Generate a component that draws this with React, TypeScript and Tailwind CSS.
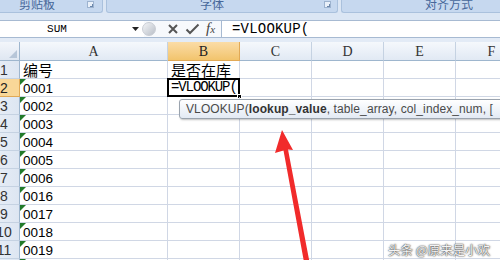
const cols = [
  { key: "A", w: "w-[148px]" },
  { key: "B", w: "w-[72px]" },
  { key: "C", w: "w-[72px]" },
  { key: "D", w: "w-[72px]" },
  { key: "E", w: "w-[72px]" },
  { key: "F", w: "w-[72px]" },
]

const ids = ["0001", "0002", "0003", "0004", "0005", "0006", "0016", "0017", "0018", "0019", ""]

const sans = "font-['Liberation_Sans','Noto_Sans_CJK_SC',sans-serif]"
const cjk = "font-['Noto_Sans_CJK_SC',sans-serif]"
const mono = "font-['Liberation_Mono',monospace]"

function GreenMark() {
  return (
    <svg className="absolute left-0 top-0" width="6" height="6" viewBox="0 0 6 6">
      <polygon points="0,0 6,0 0,6" fill="#227a2a" />
    </svg>
  )
}

function Launcher() {
  return (
    <div className="w-[7px] h-[7px] border border-[#9db3cf] bg-[#e9f0f9] flex items-end justify-end">
      <div className="w-[3px] h-[3px] border-r border-b border-[#6c87ab]" />
    </div>
  )
}

function Ribbon() {
  return (
    <div className="flex h-[13px] gap-[3px] bg-[#dbe6f4] overflow-hidden">
      <div className="w-[103px] h-full flex items-center rounded-br-[3px] bg-[#c6d8ef] border-r border-b border-[#aac1dd]">
        <span className={`pl-[19px] text-[12px] leading-none -mt-[5px] text-[#47679a] ${cjk}`}>剪贴板</span>
        <div className="ml-auto mr-[8px] -mt-[4px]">
          <Launcher />
        </div>
      </div>
      <div className="w-[232px] h-full flex items-center rounded-b-[3px] bg-[#c6d8ef] border-x border-b border-[#aac1dd]">
        <span className={`pl-[93px] text-[12px] leading-none -mt-[5px] text-[#47679a] ${cjk}`}>字体</span>
        <div className="ml-auto mr-[6px] -mt-[4px]">
          <Launcher />
        </div>
      </div>
      <div className="flex-1 h-full flex items-center rounded-bl-[3px] bg-[#c6d8ef] border-l border-b border-[#aac1dd]">
        <span className={`pl-[83px] text-[12px] leading-none -mt-[5px] text-[#47679a] ${cjk}`}>对齐方式</span>
      </div>
    </div>
  )
}

function FormulaBar() {
  return (
    <div className="flex h-[18px] bg-white border-y border-[#a7bad2]">
      <div className="w-[144px] flex items-center relative">
        <span className={`w-[114px] text-center text-[11px] text-black ${mono}`}>SUM</span>
        <svg className="absolute left-[132px] top-[6px]" width="7" height="4" viewBox="0 0 7 4">
          <polygon points="0,0 7,0 3.5,4" fill="#222" />
        </svg>
      </div>
      <div className="w-[78px] flex items-center gap-[6px] border-r border-[#a7bad2] bg-[#f7f9fc]">
        <div className="w-[14px] h-[14px] rounded-full bg-linear-to-br from-[#f4f5f7] to-[#b9bfc8] border border-[#c9cdd4] -ml-[2px]" />
        <svg width="12" height="12" viewBox="0 0 12 12" className="ml-[5px]">
          <path d="M2 2 L10 10 M10 2 L2 10" stroke="#555" strokeWidth="2" />
        </svg>
        <svg width="15" height="12" viewBox="0 0 15 12">
          <path d="M1.5 6.5 L5 10 L13.5 1.5" stroke="#555" strokeWidth="2" fill="none" />
        </svg>
        <span className="text-[15px] leading-none italic text-[#444] font-['Liberation_Serif',serif] -mt-[2px]">
          f<span className="text-[11px]">x</span>
        </span>
      </div>
      <div className="flex-1 flex items-center pl-[10px]">
        <span className={`text-[14px] tracking-[0.2px] text-black ${mono}`}>=VLOOKUP(</span>
      </div>
    </div>
  )
}

function HeaderRow() {
  return (
    <div className="flex h-[19px]">
      <div className="w-[31px] shrink-0 relative bg-linear-to-b from-[#f3f6fb] to-[#dfe7f2] border-r border-b border-[#9eb6ce]">
        <svg className="absolute right-[2px] bottom-[2px]" width="8" height="8" viewBox="0 0 8 8">
          <polygon points="8,0 8,8 0,8" fill="#b7c6d8" />
        </svg>
      </div>
      {cols.map((c) => (
        <div
          key={c.key}
          className={`${c.w} shrink-0 flex items-center justify-center border-r border-b text-[14px] font-['Liberation_Serif',serif] ${
            c.key === "B"
              ? "bg-linear-to-b from-[#fbdca6] to-[#f2c46c] border-[#e1a956] text-[#222]"
              : "bg-linear-to-b from-[#f5f8fc] to-[#e1e9f4] border-r-[#c5d2e2] border-b-[#9eb6ce] text-[#333]"
          }`}
        >
          {c.key}
        </div>
      ))}
    </div>
  )
}

function Row({ n, a, b, mark }: { n: number; a: string; b?: string; mark: boolean }) {
  const active = n === 2
  return (
    <div className="flex h-[18px]">
      <div
        className={`w-[31px] shrink-0 flex items-end justify-center pb-[1px] border-r border-b text-[14px] leading-none ${sans} ${
          active
            ? "bg-[#f9d798] border-r-[#e1a956] border-b-[#e1a956] text-[#222]"
            : "bg-linear-to-r from-[#eaf0f8] to-[#dde6f2] border-r-[#9eb6ce] border-b-[#c5d2e2] text-[#333]"
        }`}
      >
        {n}
      </div>
      <div className="w-[148px] shrink-0 relative flex items-end pl-[3px] pb-[1px] border-r border-b border-[#d0d7e5]">
        {mark && <GreenMark />}
        <span className={`leading-none text-black ${n === 1 ? `text-[15px] ${cjk}` : `text-[13.5px] ${sans}`}`}>{a}</span>
      </div>
      <div className="w-[72px] shrink-0 relative flex items-end pl-[3px] pb-[1px] border-r border-b border-[#d0d7e5]">
        {n === 1 && <span className={`text-[15px] leading-none text-black ${cjk}`}>{b}</span>}
        {active && (
          <>
            <div className="absolute -left-[1px] -top-[1px] -right-[1px] -bottom-[1px] border-2 border-black" />
            <span className={`relative text-[14px] leading-none tracking-[-1.1px] text-black mb-[1px] ${mono}`}>=VLOOKUP(</span>
            <div className="relative w-px h-[14px] bg-black ml-[2px]" />
            <div className="absolute -right-[3px] -bottom-[3px] w-[5px] h-[5px] bg-black border border-white" />
          </>
        )}
      </div>
      {cols.slice(2).map((c) => (
        <div key={c.key} className={`${c.w} shrink-0 border-r border-b border-[#d0d7e5]`} />
      ))}
    </div>
  )
}

export default function App() {
  return (
    <div className="relative w-[500px] h-[260px] overflow-hidden bg-white select-none">
      <Ribbon />
      <div className="h-[7px] bg-[#dbe6f4]" />
      <FormulaBar />
      <div className="h-[4px] bg-[#e3ebf6]" />
      <div className="-ml-[11px]">
        <HeaderRow />
        <Row n={1} a="编号" b="是否在库" mark={false} />
        {ids.map((id, i) => (
          <Row key={i} n={i + 2} a={id} mark={true} />
        ))}
      </div>

      {/* function tooltip */}
      <div
        className={`absolute left-[179px] top-[99px] h-[20px] w-[360px] flex items-center pl-[6px] rounded-[3px] border border-[#9aa3ae] bg-linear-to-b from-white to-[#e3eaf4] shadow-[1px_1px_2px_rgba(0,0,0,0.25)] text-[12px] tracking-[0.1px] text-[#4a4a4a] whitespace-nowrap ${sans}`}
      >
        VLOOKUP(<b className="text-[#333]">lookup_value</b>, table_array, col_index_num, [
      </div>

      {/* red arrow */}
      <svg className="absolute left-0 top-0 pointer-events-none" width="500" height="260" viewBox="0 0 500 260">
        <polygon
          points="282,130 275,153 283.5,150.5 304,262 309.5,262 288,149.5 293,150"
          fill="#f12b2b"
        />
      </svg>

      {/* watermark */}
      <div
        className={`absolute left-[388px] top-[244px] text-[12.5px] leading-none text-[#f4f4f4] [text-shadow:0_0_1px_#333,0_0_2px_#333] ${cjk}`}
      >
        头条 @原来是小欢
      </div>
    </div>
  )
}
